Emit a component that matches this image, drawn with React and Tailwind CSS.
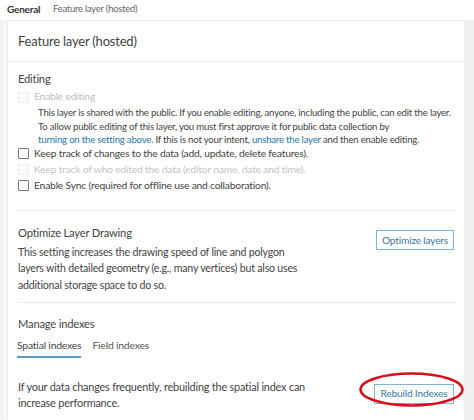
export default function App() {
  return (
    <div className="w-[474px] h-[420px] overflow-hidden bg-white text-[#444] font-['Lato',sans-serif] tracking-[-0.2px]">
      {/* top tabs */}
      <div className="h-[20px] flex items-center pl-[7px] pb-[2px] leading-none">
        <span className="font-bold text-[10px] text-[#333] w-[46px]">General</span>
        <span className="text-[9.4px] text-[#666]">Feature layer (hosted)</span>
      </div>
      <div className="flex h-[400px] overflow-hidden">
        <div className="w-[8px] shrink-0 bg-gradient-to-r from-[#f1f1f1] to-[#f9f9f9] border-r border-[#ececec]" />
        <div className="flex-1 min-w-0">
          <div className="h-[42px] border-t border-b border-[#ececec] flex items-center pt-[2px] pl-[10px] text-[13px] text-[#444]">
            Feature layer (hosted)
          </div>
          <div className="pl-[9px] pr-[8px]">
            {/* Editing */}
            <div className="border-b border-[#ececec] pb-[16px]">
              <div className="pt-[9px] text-[11.2px] leading-[16px] h-[25px] pl-[1px]">Editing</div>
              <div className="mt-[3px] flex items-center h-[14px] pl-[1px]">
                <span className="w-[11px] h-[11px] shrink-0 border border-[#ededed] bg-[#fbfbfb] mr-[5px]" />
                <span className="text-[10.3px] text-[#bdbdbd]">Enable editing</span>
              </div>
              <p className="mt-[2px] pl-[21px] text-[9.6px] leading-[13.5px] whitespace-nowrap">
                This layer is shared with the public. If you enable editing, anyone, including the public, can edit the layer.
                <br />
                To allow public editing of this layer, you must first approve it for public data collection by
                <br />
                <span className="text-[#2a77ab]">turning on the setting above.</span> If this is not your intent,{' '}
                <span className="text-[#2a77ab]">unshare the layer</span> and then enable editing.
              </p>
              <div className="flex items-center h-[16px] mt-[-1px] pl-[1px]">
                <span className="w-[11px] h-[11px] shrink-0 border border-[#7a7a7a] rounded-[1px] bg-white mr-[5px]" />
                <span className="text-[10.3px] whitespace-nowrap">Keep track of changes to the data (add, update, delete features).</span>
              </div>
              <div className="flex items-center h-[16px] pl-[1px]">
                <span className="w-[11px] h-[11px] shrink-0 border border-[#ededed] bg-[#fbfbfb] mr-[5px]" />
                <span className="text-[10.3px] text-[#c4c4c4] whitespace-nowrap">Keep track of who edited the data (editor name, date and time).</span>
              </div>
              <div className="flex items-center h-[16px] pl-[1px]">
                <span className="w-[11px] h-[11px] shrink-0 border border-[#7a7a7a] rounded-[1px] bg-white mr-[5px]" />
                <span className="text-[10.3px] whitespace-nowrap">Enable Sync (required for offline use and collaboration).</span>
              </div>
            </div>
            {/* Optimize */}
            <div className="border-b border-[#ececec] pb-[9px] flex">
              <div className="flex-1 pl-[1px]">
                <div className="pt-[14px] text-[11.2px] leading-[16px]">Optimize Layer Drawing</div>
                <p className="mt-[3px] text-[10.6px] leading-[16.5px] whitespace-nowrap">
                  This setting increases the drawing speed of line and polygon
                  <br />
                  layers with detailed geometry (e.g., many vertices) but also uses
                  <br />
                  additional storage space to do so.
                </p>
              </div>
              <div className="pt-[15px] pr-[2px]">
                <button className="h-[20px] w-[78px] border border-[#80b4d4] text-[10.2px] text-[#3b7aa3] bg-white">
                  Optimize layers
                </button>
              </div>
            </div>
            {/* Manage indexes */}
            <div className="pt-[13px] text-[11.2px] leading-[16px] pl-[1px]">Manage indexes</div>
            <div className="flex gap-[11px] mt-[6px] text-[10.4px] leading-[14px]">
              <div className="pb-[4px] border-b-2 border-[#5a9cbf]">Spatial indexes</div>
              <div className="text-[#555]">Field indexes</div>
            </div>
            <div className="flex mt-[21px] items-start">
              <p className="flex-1 text-[10.9px] leading-[16px] whitespace-nowrap pl-[1px]">
                If your data changes frequently, rebuilding the spatial index can
                <br />
                increase performance.
              </p>
              <div className="relative mr-[2px]">
                <button className="h-[20px] w-[80px] border border-[#80b4d4] text-[10.2px] text-[#3b7aa3] bg-white">
                  Rebuild Indexes
                </button>
                <svg className="absolute left-[-15px] top-[-7px]" width="105" height="35" viewBox="0 0 105 35">
                  <ellipse cx="52.5" cy="17.5" rx="51" ry="16" fill="none" stroke="#d4101c" strokeWidth="2.5" />
                </svg>
              </div>
            </div>
          </div>
        </div>
        <div className="w-[10px] shrink-0 bg-[#f0f0f0]" />
      </div>
    </div>
  );
}
